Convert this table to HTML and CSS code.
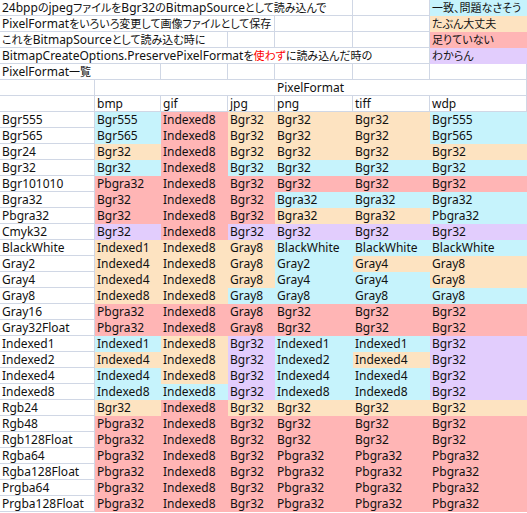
FILE: index.html
```html
<!DOCTYPE html>
<html lang="ja">
<head>
<meta charset="utf-8">
<title>PixelFormat一覧</title>
<link rel="stylesheet" href="styles.css">
</head>
<body>
<div class="sheet">
  <div class="c s5">24bpp<span class="j">の</span>jpeg<span class="j">ファイルを</span>Bgr32<span class="j">の</span>BitmapSource<span class="j">として読み込んで</span></div>
  <div class="c"></div>
  <div class="c cy"><span class="j">一致、問題なさそう</span></div>

  <div class="c s4">PixelFormat<span class="j">をいろいろ変更して画像ファイルとして保存</span></div>
  <div class="c"></div>
  <div class="c"></div>
  <div class="c pe"><span class="j">たぶん大丈夫</span></div>

  <div class="c s3"><span class="j">これを</span>BitmapSource<span class="j">として読み込む時に</span></div>
  <div class="c"></div>
  <div class="c"></div>
  <div class="c"></div>
  <div class="c pk"><span class="j">足りていない</span></div>

  <div class="c s6">BitmapCreateOptions.PreservePixelFormat<span class="j">を</span><span class="j red">使わず</span><span class="j">に読み込んだ時の</span></div>
  <div class="c pu"><span class="j">わからん</span></div>

  <div class="c s2">PixelFormat<span class="j">一覧</span></div>
  <div class="c"></div>
  <div class="c"></div>
  <div class="c"></div>
  <div class="c"></div>
  <div class="c"></div>

  <div class="c"></div>
  <div class="c s6 center">PixelFormat</div>

  <div class="c"></div>
  <div class="c">bmp</div>
  <div class="c">gif</div>
  <div class="c">jpg</div>
  <div class="c">png</div>
  <div class="c">tiff</div>
  <div class="c">wdp</div>

  <div class="c">Bgr555</div><div class="c cy">Bgr555</div><div class="c pk">Indexed8</div><div class="c pe">Bgr32</div><div class="c pe">Bgr32</div><div class="c pe">Bgr32</div><div class="c cy">Bgr555</div>
  <div class="c">Bgr565</div><div class="c cy">Bgr565</div><div class="c pk">Indexed8</div><div class="c pe">Bgr32</div><div class="c pe">Bgr32</div><div class="c pe">Bgr32</div><div class="c cy">Bgr565</div>
  <div class="c">Bgr24</div><div class="c pe">Bgr32</div><div class="c pk">Indexed8</div><div class="c pe">Bgr32</div><div class="c pe">Bgr32</div><div class="c pe">Bgr32</div><div class="c pe">Bgr32</div>
  <div class="c">Bgr32</div><div class="c cy">Bgr32</div><div class="c pk">Indexed8</div><div class="c cy">Bgr32</div><div class="c cy">Bgr32</div><div class="c cy">Bgr32</div><div class="c cy">Bgr32</div>
  <div class="c">Bgr101010</div><div class="c pk">Pbgra32</div><div class="c pk">Indexed8</div><div class="c pk">Bgr32</div><div class="c pk">Bgr32</div><div class="c pk">Bgr32</div><div class="c pk">Bgr32</div>
  <div class="c">Bgra32</div><div class="c pk">Bgr32</div><div class="c pk">Indexed8</div><div class="c pk">Bgr32</div><div class="c cy">Bgra32</div><div class="c cy">Bgra32</div><div class="c cy">Bgra32</div>
  <div class="c">Pbgra32</div><div class="c pk">Bgr32</div><div class="c pk">Indexed8</div><div class="c pk">Bgr32</div><div class="c pe">Bgra32</div><div class="c pe">Bgra32</div><div class="c cy">Pbgra32</div>
  <div class="c">Cmyk32</div><div class="c pu">Bgr32</div><div class="c pk">Indexed8</div><div class="c pu">Bgr32</div><div class="c pu">Bgr32</div><div class="c pu">Bgr32</div><div class="c pu">Bgr32</div>
  <div class="c">BlackWhite</div><div class="c pe">Indexed1</div><div class="c pe">Indexed8</div><div class="c pe">Gray8</div><div class="c cy">BlackWhite</div><div class="c cy">BlackWhite</div><div class="c cy">BlackWhite</div>
  <div class="c">Gray2</div><div class="c pe">Indexed4</div><div class="c pe">Indexed8</div><div class="c pe">Gray8</div><div class="c cy">Gray2</div><div class="c pe">Gray4</div><div class="c pe">Gray8</div>
  <div class="c">Gray4</div><div class="c pe">Indexed4</div><div class="c pe">Indexed8</div><div class="c pe">Gray8</div><div class="c cy">Gray4</div><div class="c cy">Gray4</div><div class="c pe">Gray8</div>
  <div class="c">Gray8</div><div class="c pe">Indexed8</div><div class="c pe">Indexed8</div><div class="c cy">Gray8</div><div class="c cy">Gray8</div><div class="c cy">Gray8</div><div class="c cy">Gray8</div>
  <div class="c">Gray16</div><div class="c pk">Pbgra32</div><div class="c pk">Indexed8</div><div class="c pk">Gray8</div><div class="c pk">Bgr32</div><div class="c pk">Bgr32</div><div class="c pk">Bgr32</div>
  <div class="c">Gray32Float</div><div class="c pk">Pbgra32</div><div class="c pk">Indexed8</div><div class="c pk">Gray8</div><div class="c pk">Bgr32</div><div class="c pk">Bgr32</div><div class="c pk">Bgr32</div>
  <div class="c">Indexed1</div><div class="c cy">Indexed1</div><div class="c pe">Indexed8</div><div class="c pu">Bgr32</div><div class="c cy">Indexed1</div><div class="c cy">Indexed1</div><div class="c pu">Bgr32</div>
  <div class="c">Indexed2</div><div class="c pe">Indexed4</div><div class="c pe">Indexed8</div><div class="c pu">Bgr32</div><div class="c cy">Indexed2</div><div class="c pe">Indexed4</div><div class="c pu">Bgr32</div>
  <div class="c">Indexed4</div><div class="c cy">Indexed4</div><div class="c pe">Indexed8</div><div class="c pu">Bgr32</div><div class="c cy">Indexed4</div><div class="c cy">Indexed4</div><div class="c pu">Bgr32</div>
  <div class="c">Indexed8</div><div class="c cy">Indexed8</div><div class="c cy">Indexed8</div><div class="c pu">Bgr32</div><div class="c cy">Indexed8</div><div class="c cy">Indexed8</div><div class="c pu">Bgr32</div>
  <div class="c">Rgb24</div><div class="c pe">Bgr32</div><div class="c pk">Indexed8</div><div class="c pe">Bgr32</div><div class="c pe">Bgr32</div><div class="c pe">Bgr32</div><div class="c pe">Bgr32</div>
  <div class="c">Rgb48</div><div class="c pk">Pbgra32</div><div class="c pk">Indexed8</div><div class="c pk">Bgr32</div><div class="c pk">Bgr32</div><div class="c pk">Bgr32</div><div class="c pk">Bgr32</div>
  <div class="c">Rgb128Float</div><div class="c pk">Pbgra32</div><div class="c pk">Indexed8</div><div class="c pk">Bgr32</div><div class="c pk">Bgr32</div><div class="c pk">Bgr32</div><div class="c pk">Bgr32</div>
  <div class="c">Rgba64</div><div class="c pk">Pbgra32</div><div class="c pk">Indexed8</div><div class="c pk">Bgr32</div><div class="c pk">Pbgra32</div><div class="c pk">Pbgra32</div><div class="c pk">Pbgra32</div>
  <div class="c">Rgba128Float</div><div class="c pk">Pbgra32</div><div class="c pk">Indexed8</div><div class="c pk">Bgr32</div><div class="c pk">Pbgra32</div><div class="c pk">Pbgra32</div><div class="c pk">Pbgra32</div>
  <div class="c">Prgba64</div><div class="c pk">Pbgra32</div><div class="c pk">Indexed8</div><div class="c pk">Bgr32</div><div class="c pk">Pbgra32</div><div class="c pk">Pbgra32</div><div class="c pk">Pbgra32</div>
  <div class="c">Prgba128Float</div><div class="c pk">Pbgra32</div><div class="c pk">Indexed8</div><div class="c pk">Bgr32</div><div class="c pk">Pbgra32</div><div class="c pk">Pbgra32</div><div class="c pk">Pbgra32</div>
</div>
</body>
</html>
```
FILE: styles.css
```css
html, body {
  margin: 0;
  padding: 0;
  background: #ffffff;
}
body {
  font-family: "Noto Sans", "Noto Sans CJK JP", sans-serif;
  font-size: 12px;
  color: #111111;
}
.sheet {
  display: grid;
  grid-template-columns: 95px 66px 67px 47px 78px 77px 97px;
  grid-auto-rows: 16px;
  width: 527px;
}
.c {
  box-sizing: border-box;
  border-right: 1px solid #d0d7e5;
  border-bottom: 1px solid #d0d7e5;
  padding-left: 2px;
  line-height: 15px;
  white-space: nowrap;
  overflow: hidden;
}
.s2 { grid-column: span 2; }
.s3 { grid-column: span 3; }
.s4 { grid-column: span 4; }
.s5 { grid-column: span 5; }
.s6 { grid-column: span 6; }
.center { text-align: center; padding-left: 0; }
.j {
  font-family: "Noto Sans CJK JP", sans-serif;
  font-size: 11px;
  font-feature-settings: "palt";
}
.red { color: #ff0000; }
.cy { background: #c6f3fc; border-color: transparent; }
.pe { background: #fde3c1; border-color: transparent; }
.pk { background: #ffb5b5; border-color: transparent; }
.pu { background: #e2cdfd; border-color: transparent; }
```
